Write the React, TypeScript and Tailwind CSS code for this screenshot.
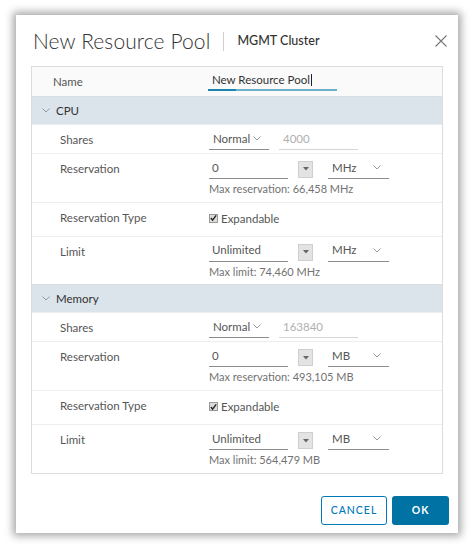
import React from "react";

const font = { fontFamily: "Lato, 'Open Sans', sans-serif" };

function Chevron({ className = "" }: { className?: string }) {
  return (
    <svg width="8" height="5" viewBox="0 0 8 5" className={className}>
      <path d="M0.5 0.5 L4 4 L7.5 0.5" fill="none" stroke="#9a9a9a" strokeWidth="1" />
    </svg>
  );
}

function Select({ value, w }: { value: string; w: string }) {
  return (
    <div className={`flex items-center justify-between h-[22px] border-b border-[#8c8c8c] pl-[4px] pr-[8px] ${w}`}>
      <span className="text-[11.5px] text-[#565656]">{value}</span>
      <Chevron />
    </div>
  );
}

function DropBtn() {
  return (
    <div className="w-[15px] h-[17px] bg-[#e3e3e3] border border-[#cfcfcf] flex items-center justify-center">
      <svg width="6" height="4" viewBox="0 0 6 4">
        <path d="M0 0 L6 0 L3 3.5 Z" fill="#666" />
      </svg>
    </div>
  );
}

function Row({ label, children, h }: { label: string; children: React.ReactNode; h: string }) {
  return (
    <div className={`flex border-t border-[#eeeeee] ${h}`}>
      <div className="w-[177px] pl-[28px] pt-[6px] text-[11.5px] text-[#565656]">{label}</div>
      <div className="flex-1 pt-[3px]">{children}</div>
    </div>
  );
}

function Section({ title, unit, shares, maxRes, maxLimit }: { title: string; unit: string; shares: string; maxRes: string; maxLimit: string }) {
  return (
    <>
      <div className="h-[28px] bg-[#dbe4ea] flex items-center pl-[10px] border-t border-[#d8dee3]">
        <Chevron className="mr-[6px]" />
        <span className="text-[11.5px] text-[#333]">{title}</span>
      </div>
      <Row label="Shares" h="h-[29px]">
        <div className="flex gap-[10px]">
          <Select value="Normal" w="w-[60px]" />
          <div className="w-[79px] h-[22px] border-b border-[#d5d5d5] pl-[4px] text-[11.5px] text-[#b0b0b0] flex items-center">{shares}</div>
        </div>
      </Row>
      <Row label="Reservation" h="h-[49px]">
        <div className="flex items-end">
          <div className="w-[79px] h-[22px] border-b border-[#8c8c8c] pl-[3px] text-[11.5px] text-[#565656] flex items-center">0</div>
          <div className="ml-[10px] mb-[1px]"><DropBtn /></div>
          <div className="ml-[15px]"><Select value={unit} w="w-[61px]" /></div>
        </div>
        <div className="text-[11px] text-[#727272] mt-[2px]">{maxRes}</div>
      </Row>
      <Row label="Reservation Type" h="h-[34px]">
        <div className="flex items-center gap-[3px] pt-[4px]">
          <div className="w-[9px] h-[9px] bg-[#dcdcdc] border border-[#999] flex items-center justify-center">
            <svg width="8" height="8" viewBox="0 0 8 8"><path d="M1 4 L3 6.5 L7 1" fill="none" stroke="#222" strokeWidth="1.6" /></svg>
          </div>
          <span className="text-[11.5px] text-[#565656]">Expandable</span>
        </div>
      </Row>
      <Row label="Limit" h="h-[49px]">
        <div className="flex items-end">
          <div className="w-[79px] h-[22px] border-b border-[#8c8c8c] pl-[3px] text-[11.5px] text-[#565656] flex items-center">Unlimited</div>
          <div className="ml-[10px] mb-[1px]"><DropBtn /></div>
          <div className="ml-[15px]"><Select value={unit} w="w-[61px]" /></div>
        </div>
        <div className="text-[11px] text-[#727272] mt-[2px]">{maxLimit}</div>
      </Row>
    </>
  );
}

export default function App() {
  return (
    <div className="w-[474px] h-[548px] bg-white pt-[15px] pl-[16px]" style={font}>
      <div className="w-[442px] h-[518px] bg-white shadow-[0_0_8px_3px_rgba(0,0,0,0.35)] flex flex-col">
        <div className="flex items-center h-[48px] pl-[17px] pr-[10px] pt-[4px]">
          <span className="text-[21px] font-light text-[#333] tracking-[0.1px]">New Resource Pool</span>
          <div className="w-px h-[19px] bg-[#cfcfcf] mx-[13px]" />
          <span className="text-[12.5px] font-medium text-[#333]">MGMT Cluster</span>
          <div className="flex-1" />
          <svg width="12" height="12" viewBox="0 0 12 12" className="mr-[1px]">
            <path d="M0.5 0.5 L11.5 11.5 M11.5 0.5 L0.5 11.5" stroke="#777" strokeWidth="1.1" />
          </svg>
        </div>
        <div className="mx-[15px] mt-[3px] h-[408px] border border-[#dcdcdc] flex flex-col">
          <div className="h-[29px] bg-[#fafafa] flex">
            <div className="w-[176px] pl-[21px] pt-[6px] text-[11.5px] text-[#565656]">Name</div>
            <div className="pt-[2px]">
              <div className="w-[129px] h-[22px] flex items-center pl-[4px] text-[11.5px] text-[#333] relative">
                New Resource Pool<span className="w-px h-[12px] bg-[#222] ml-[1px]" />
                <div className="absolute left-0 right-0 bottom-0 h-[2px] bg-[#6ab1c9]" />
                <div className="absolute left-0 w-[28px] bottom-0 h-[2px] bg-[#1a85ad]" />
              </div>
            </div>
          </div>
          <Section title="CPU" unit="MHz" shares="4000" maxRes="Max reservation: 66,458 MHz" maxLimit="Max limit: 74,460 MHz" />
          <Section title="Memory" unit="MB" shares="163840" maxRes="Max reservation: 493,105 MB" maxLimit="Max limit: 564,479 MB" />
        </div>
        <div className="flex justify-end gap-[5px] mt-[22px] pr-[9px]">
          <button className="w-[66px] h-[29px] border border-[#0079b8] rounded-[3px] text-[10.5px] tracking-[1px] text-[#0079b8] font-medium">CANCEL</button>
          <button className="w-[57px] h-[29px] bg-[#0072a3] rounded-[3px] text-[10.5px] tracking-[1px] text-white font-bold">OK</button>
        </div>
      </div>
    </div>
  );
}
